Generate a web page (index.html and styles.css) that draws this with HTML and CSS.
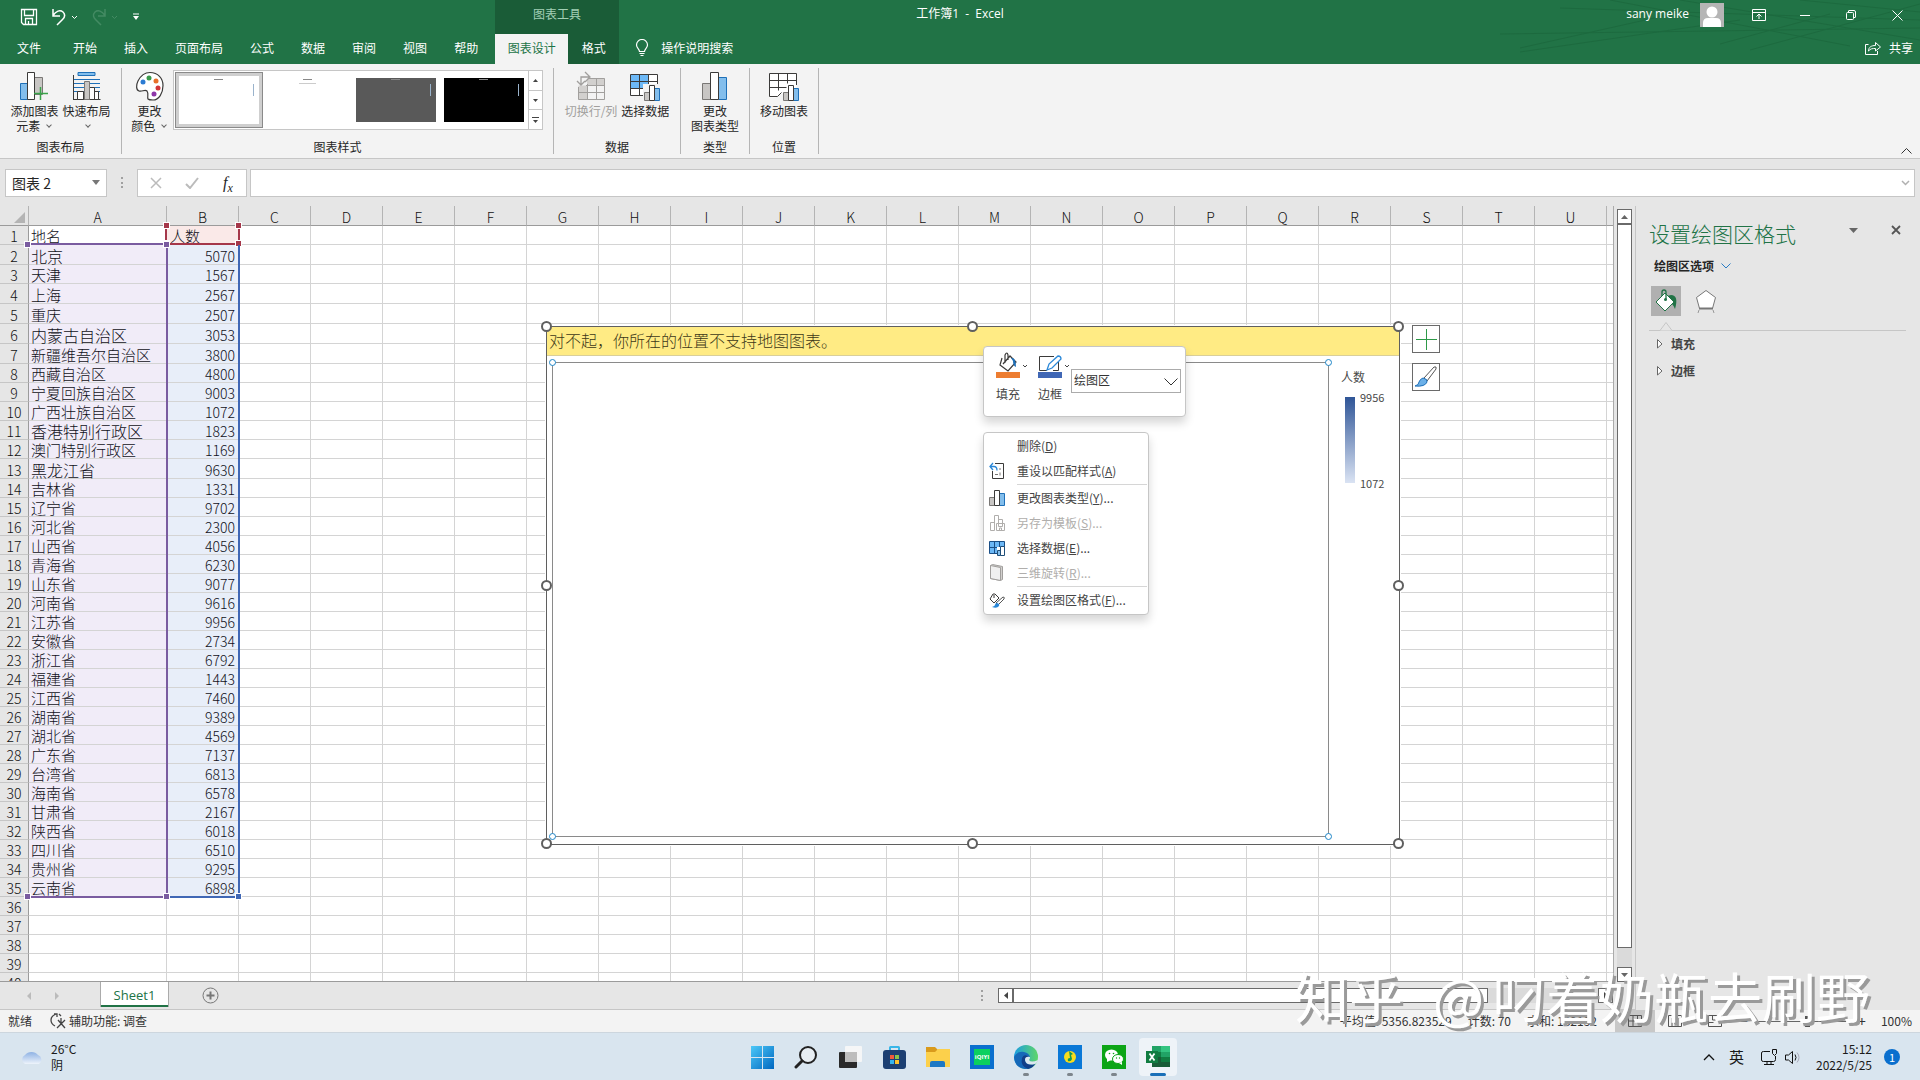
FILE: index.html
```html
<!DOCTYPE html>
<html lang="zh-CN">
<head>
  <meta charset="UTF-8">
  <meta name="viewport" content="width=device-width, initial-scale=1.0">
  <title>工作簿1 - Excel</title>
  <link rel="stylesheet" href="styles.css">
</head>
<body>
  <header class="app-header">
    <svg class="header-art" width="420" height="64" fill="none" stroke="#1d6a3f">
      <path d="M20 48L190 10M20 52L240 20M0 34L420 28M110 0L350 46M180 0L420 40M250 50L420 4M220 44L330 14M60 8L420 20M300 0L420 12"/>
    </svg>
    <div class="title-bar">
      <div class="title-left">
        <div class="quick-access">
          <button class="qa save" aria-label="保存"><svg width="18" height="18" viewBox="0 0 18 18" fill="none" stroke="#fff"><path d="M1.500 1.500h15v15h-13l-2-2zM4.500 1.500v6h9v-6M5.500 16.500v-6h7v6M8.500 13v3" stroke-width="1.300"/></svg></button>
          <button class="qa" aria-label="撤消"><svg width="16" height="18" viewBox="0 0 16 18" fill="none" stroke="#fff" stroke-width="1.500"><path d="M2 1v7h7M2 7.500C5 3 9 1.500 12 4c3 3 1 6-.5 7.500L6 17"/></svg></button>
          <button class="qa chev" aria-label="撤消列表"><svg width="7" height="5" fill="none" stroke="#fff"><path d="M1 1l2.500 2.500L6 1"/></svg></button>
          <button class="qa dim" aria-label="恢复"><svg width="16" height="18" viewBox="0 0 16 18" fill="none" stroke="#5b9b77" stroke-width="1.500"><path d="M14 1v7H7M14 7.500C11 3 7 1.500 4 4c-3 3-1 6 .5 7.500L10 17"/></svg></button>
          <button class="qa chev dim" aria-label="恢复列表"><svg width="7" height="5" fill="none" stroke="#5b9b77"><path d="M1 1l2.500 2.500L6 1"/></svg></button>
          <button class="qa more" aria-label="自定义"><svg width="8" height="8"><path d="M1 1h6" stroke="#fff"/><path d="M1 3h6l-3 4z" fill="#fff"/></svg></button>
        </div>
        <div class="context-title">图表工具</div>
      </div>
      <h1 class="doc-title">工作簿1&nbsp; -&nbsp; Excel</h1>
      <div class="title-right">
        <span class="user-name">sany meike</span>
        <svg class="avatar" width="24" height="24"><rect width="24" height="24" fill="#b5b5b5"/><circle cx="12" cy="9" r="5.500" fill="#fff"/><path d="M3 24v-4q0-5 5-5h8q5 0 5 5v4z" fill="#fff"/></svg>
        <button class="win-btn" aria-label="功能区显示选项"><svg width="14" height="12" fill="none" stroke="#fff"><path d="M.5.5h13v11H.5zM.5 3.500h13M7 10V5M4.500 7.500L7 5l2.500 2.500"/></svg></button>
        <button class="win-btn" aria-label="最小化"><svg width="10" height="10"><path d="M0 5.500h10" stroke="#fff"/></svg></button>
        <button class="win-btn" aria-label="还原"><svg width="10" height="10" fill="none" stroke="#fff"><rect x=".5" y="2.500" width="7" height="7" rx="1"/><path d="M2.500 2.500V1q0-.5.5-.5h5q1.500 0 1.500 1.500v5q0 .5-.5.5H8"/></svg></button>
        <button class="win-btn" aria-label="关闭"><svg width="11" height="11"><path d="M.5.5l10 10M10.500.5l-10 10" stroke="#fff"/></svg></button>
      </div>
    </div>
    <nav class="tabs">
      <button class="tab file">文件</button>
      <button class="tab">开始</button>
      <button class="tab">插入</button>
      <button class="tab">页面布局</button>
      <button class="tab">公式</button>
      <button class="tab">数据</button>
      <button class="tab">审阅</button>
      <button class="tab">视图</button>
      <button class="tab help">帮助</button>
      <button class="tab active">图表设计</button>
      <button class="tab context">格式</button>
      <button class="tab search">
        <svg width="14" height="18" viewBox="0 0 14 18" fill="none" stroke="#fff" stroke-width="1.200"><path d="M4.500 12.500C4.500 10 1.500 9 1.500 6a5.300 5.300 0 0 1 11 0c0 3-3 4-3 6.500zM4.500 14.500h5M5.500 16.500h3"/></svg>
        操作说明搜索
      </button>
      <button class="tab share">
        <svg width="16" height="14" viewBox="0 0 16 14" fill="none" stroke="#fff"><path d="M3.500 3.500H.5v10h12V10M3.500 10c0-4 3-5.500 7-5.500v-3l5 4.500-5 4V7.500c-3 0-5 0-7 2.500z"/></svg>
        共享
      </button>
    </nav>
  </header>

  <section class="ribbon">
    <div class="group g-layout">
      <div class="group-body">
        <button class="cmd">
          <svg width="30" height="30"><path d="M1.500 12.500h8v16h-8z" fill="#83beec" stroke="#1f70b8"/><path d="M15.500 6.500h8v17h-8z" fill="#c8c6c4" stroke="#797775"/><path d="M8.500 1.500h7v27h-7z" fill="#fff" stroke="#3b3a39"/><path d="M21.500 16v13M15 22.500h14" stroke="#3aa34a" stroke-width="1.500"/></svg>
          <span>添加图表<br>元素 <i class="chevron"></i></span>
        </button>
        <button class="cmd">
          <svg width="30" height="30"><path d="M6 1.500h17v3H6z" fill="#83beec" stroke="#1f70b8"/><path d="M1 8.500h27M1 12.500h27M1 16.500h27M1 20.500h27" stroke="#1f70b8"/><path d="M1.500 4v25M1.500 28.500h27" stroke="#3b3a39"/><path d="M5.500 20.500h6v8h-6zM17.500 16.500h5v12h-5zM22.500 20.500h4v8h-4z" fill="#fff" stroke="#3b3a39"/><path d="M12.500 10.500h5v18h-5z" fill="#c8c6c4" stroke="#797775"/></svg>
          <span>快速布局<br><i class="chevron"></i></span>
        </button>
      </div>
      <div class="group-name">图表布局</div>
    </div>

    <div class="group g-style">
      <div class="group-body">
        <button class="cmd narrow">
          <svg width="30" height="30"><path d="M13 28c-1-3 1-5-1-8-2-2-5 1-8 0-3-1-3-6-1-10C6 4 10 1.500 15 1.500c8 0 13 6 13 13C28 22 24 29 18 29c-3 0-4 0-5-1z" fill="#fff" stroke="#3b3a39" stroke-width="1.200"/><circle cx="8" cy="11" r="2.500" fill="#2b7cd3"/><circle cx="14" cy="7" r="2.500" fill="#3a9a4b"/><circle cx="21" cy="10" r="2.500" fill="#e8702a"/><circle cx="23" cy="17" r="2.500" fill="#d13438"/><circle cx="19" cy="23" r="2.500" fill="#8e35a8"/></svg>
          <span>更改<br>颜色 <i class="chevron"></i></span>
        </button>
        <div class="gallery">
          <button class="thumb selected" aria-label="样式 1"><i class="t-title"></i><i class="t-legend"></i></button>
          <button class="thumb" aria-label="样式 2"><i class="t-title"></i><i class="t-sub"></i></button>
          <button class="thumb gray" aria-label="样式 3"><i class="t-title"></i><i class="t-legend"></i></button>
          <button class="thumb black" aria-label="样式 4"><i class="t-title"></i><i class="t-legend"></i></button>
          <div class="gallery-scroll">
            <button aria-label="上一行"><svg width="5" height="3"><path d="M0 3h5L2.500 0z" fill="#444"/></svg></button>
            <button aria-label="下一行"><svg width="5" height="3"><path d="M0 0h5L2.500 3z" fill="#444"/></svg></button>
            <button aria-label="其他"><svg width="7" height="6"><path d="M0 .5h7" stroke="#444"/><path d="M1 3h5L3.500 6z" fill="#444"/></svg></button>
          </div>
        </div>
      </div>
      <div class="group-name">图表样式</div>
    </div>

    <div class="group g-data">
      <div class="group-body">
        <button class="cmd" disabled>
          <svg width="30" height="30"><path d="M2 7.500h27v21H2z" fill="#f3f3f3"/><path d="M11 7.500h18v7H11zM2.500 14.500h9v14h-9z" fill="#d2d0ce"/><path d="M13 7.500h15.500v21h-26V16M10 14.500h18.500M2.500 21.500h26M11.500 13v15.500M20.500 7.500v21" fill="none" stroke="#a19f9d"/><path d="M5 14V6h8M1 10l4 4 4-4M9 1l5 5-5 5" fill="none" stroke="#a19f9d" stroke-width="1.300"/></svg>
          <span>切换行/列</span>
        </button>
        <button class="cmd">
          <svg width="32" height="30"><path d="M1.500 3.500h27v21h-27z" fill="#fff"/><path d="M1.500 3.500h18v14h-18z" fill="#6cb8f6"/><path d="M1.500 3.500h27v21h-27zM1.500 10.500h27M1.500 17.500h27M10.500 3.500v21M19.500 3.500v21" fill="none" stroke="#3b3a39"/><path d="M14 13h17v17H14z" fill="#f3f3f3"/><path d="M15.500 21.500h5v8h-5z" fill="#c8c6c4" stroke="#797775"/><path d="M25.500 17.500h5v12h-5z" fill="#83beec" stroke="#1f70b8"/><path d="M20.500 14.500h5v15h-5z" fill="#fff" stroke="#3b3a39"/></svg>
          <span>选择数据</span>
        </button>
      </div>
      <div class="group-name">数据</div>
    </div>

    <div class="group g-small">
      <div class="group-body">
        <button class="cmd">
          <svg width="28" height="30"><path d="M1.500 12.500h8v16h-8z" fill="#c8c6c4" stroke="#797775"/><path d="M17.500 6.500h8v22h-8z" fill="#83beec" stroke="#1f70b8"/><path d="M9.500 1.500h8v27h-8z" fill="#fff" stroke="#3b3a39"/></svg>
          <span>更改<br>图表类型</span>
        </button>
      </div>
      <div class="group-name">类型</div>
    </div>

    <div class="group g-small">
      <div class="group-body">
        <button class="cmd">
          <svg width="32" height="30"><path d="M1.500 2.500h27v16l-17 5-4 3h-6z" fill="#fff"/><path d="M28.500 14V2.500h-27v23h8l4-4M1.500 9.500h27M1.500 16.500h17M10.500 2.500v17M19.500 2.500v10" fill="none" stroke="#3b3a39"/><path d="M15.500 21.500h5v8h-5z" fill="#c8c6c4" stroke="#797775"/><path d="M25.500 17.500h5v12h-5z" fill="#83beec" stroke="#1f70b8"/><path d="M20.500 14.500h5v15h-5z" fill="#fff" stroke="#3b3a39"/></svg>
          <span>移动图表</span>
        </button>
      </div>
      <div class="group-name">位置</div>
    </div>

    <button class="collapse" aria-label="折叠功能区"><svg width="11" height="6" fill="none" stroke="#333"><path d="M.5 5.500l5-5 5 5"/></svg></button>
  </section>

  <section class="formula-bar">
    <div class="name-box">
      <input type="text" value="图表 2" aria-label="名称框">
      <svg width="8" height="5"><path d="M0 0h8L4 5z" fill="#777"/></svg>
    </div>
    <i class="dots"></i>
    <div class="fx-buttons">
      <button aria-label="取消"><svg width="12" height="12"><path d="M1 1l10 10M11 1L1 11" stroke="#bbb" stroke-width="1.500"/></svg></button>
      <button aria-label="输入"><svg width="14" height="12"><path d="M1 7l4 4 8-10" fill="none" stroke="#bbb" stroke-width="2"/></svg></button>
      <button class="fx" aria-label="插入函数">f<sub>x</sub></button>
    </div>
    <div class="formula-input">
      <input type="text" aria-label="编辑栏">
      <svg width="9" height="6" fill="none" stroke="#b0b0b0" stroke-width="1.500"><path d="M1 1l3.500 3.500L8 1"/></svg>
    </div>
  </section>

  <main class="workspace">
    <div class="book">
      <div class="sheet-row">
        <div class="sheet">
          <table class="cells">
            <colgroup id="cols"></colgroup>
            <thead><tr id="colHeads"></tr></thead>
            <tbody id="rows"></tbody>
          </table>

          <div class="range range-title"><i></i><i></i><i></i><i></i></div>
          <div class="range range-values"><i></i></div>
          <div class="range range-names"><i></i><i></i><i></i><i></i></div>

          <div class="chart">
            <div class="banner">对不起，你所在的位置不支持地图图表。</div>
            <div class="chart-body">
              <div class="plot"><i class="dot tl"></i><i class="dot tr"></i><i class="dot bl"></i><i class="dot br"></i></div>
              <div class="legend">
                <div class="legend-title">人数</div>
                <div class="legend-scale">
                  <div class="legend-bar"></div>
                  <div class="legend-labels"><span>9956</span><span>1072</span></div>
                </div>
              </div>
            </div>
            <i class="handle" style="left:0%;top:0%"></i>
            <i class="handle" style="left:50%;top:0%"></i>
            <i class="handle" style="left:100%;top:0%"></i>
            <i class="handle" style="left:0%;top:50%"></i>
            <i class="handle" style="left:100%;top:50%"></i>
            <i class="handle" style="left:0%;top:100%"></i>
            <i class="handle" style="left:50%;top:100%"></i>
            <i class="handle" style="left:100%;top:100%"></i>

            <div class="chart-tools">
              <button aria-label="图表元素"><svg width="22" height="22"><path d="M11.500 1v21M1 11.500h21" stroke="#2e9a48"/></svg></button>
              <button aria-label="图表样式"><svg width="24" height="24"><path d="M10 13L20 2q3-1 2 2L13 16z" fill="#fff" stroke="#555"/><path d="M9 13q5 1 4 4-2 5-12 4 4-1 4-4 1-3 4-4z" fill="#6cb0e8" stroke="#1f70b8"/></svg></button>
            </div>

            <div class="mini-toolbar">
              <button class="mini">
                <svg width="34" height="26"><path d="M6 6l-2 7 8 6 8-9-6-6-7 8M9 11V3q2-4 3 0v5" fill="none" stroke="#3b3a39" stroke-width="1.200"/><path d="M15 6q5-1 5 9-3-1-3-6z" fill="#1f70b8"/><path d="M0 20h24v6H0z" fill="#ed7d31"/><path d="M27 13l2 2 2-2" fill="none" stroke="#444"/></svg>
                <span>填充</span>
              </button>
              <button class="mini">
                <svg width="34" height="26"><path d="M16 4.500H1.500v14H9M20.500 10v8.500H15" fill="none" stroke="#3b3a39"/><path d="M9 18l2-6 9-8q3 0 3 3l-9 9z" fill="#fff" stroke="#2b88d8" stroke-width="1.300"/><path d="M0 20h24v6H0z" fill="#4067b5"/><path d="M27 13l2 2 2-2" fill="none" stroke="#444"/></svg>
                <span>边框</span>
              </button>
              <div class="picker">
                <select aria-label="图表元素"><option>绘图区</option></select>
                <svg width="14" height="8" fill="none" stroke="#333"><path d="M.5.5L7 7 13.500.5"/></svg>
              </div>
            </div>

            <div class="context-menu">
              <button><i></i>删除(<u>D</u>)</button>
              <button><svg width="16" height="18" fill="none"><path d="M6 1.500h8.500v15h-11V9" stroke="#3b3a39"/><path d="M1 4.500h4q3 0 3 4M4 1L1 4.500 4 8" stroke="#2b88d8" stroke-width="1.300"/><path d="M6 12.500h3M11 6v2M11 10.500v3" stroke="#797775"/></svg>重设以匹配样式(<u>A</u>)</button>
              <hr>
              <button><svg width="16" height="18"><path d="M.5 8.500h5v8h-5z" fill="#c8c6c4" stroke="#797775"/><path d="M10.500 4.500h5v12h-5z" fill="#83beec" stroke="#1f70b8"/><path d="M5.500 1.500h5v15h-5z" fill="#fff" stroke="#3b3a39"/></svg>更改图表类型(<u>Y</u>)...</button>
              <button disabled><svg width="16" height="18" fill="none" stroke="#b0aeac"><path d="M1.500 8.500h4v8h-4zM5.500 16V1.500h4V9M9.500 5.500h4V9M7.500 9.500h8v7h-8zM9.500 9.500v3h4v-3M10.500 16v-2h2v2"/></svg>另存为模板(<u>S</u>)...</button>
              <button><svg width="16" height="18"><path d="M.5 2.500h15v12H.5z" fill="#6cb8f6"/><path d="M.5 2.500h15v12H.5zM.5 8.500h15M5.500 2.500v12M10.500 2.500v6" fill="none" stroke="#1b4f86"/><path d="M8 8h8v9H8z" fill="#fff"/><path d="M8.500 11.500h3v5h-3z" fill="#83beec" stroke="#1f4e79"/><path d="M11.500 7.500h4v9h-4z" fill="#fff" stroke="#1f4e79"/></svg>选择数据(<u>E</u>)...</button>
              <button disabled><svg width="16" height="18" stroke="#a19f9d"><path d="M1.500 1.500l2-1 10 2v13l-2 1-10-2z" fill="#d2d0ce"/><path d="M1.500 1.500l10 2v13l-10-2z" fill="#f0f0f0"/></svg>三维旋转(<u>R</u>)...</button>
              <hr>
              <button><svg width="16" height="18"><path d="M4 3L1 8l4 4 5-5-4-4M5 7V2" fill="none" stroke="#3b3a39"/><path d="M7 12l7-6q2 0 1 2l-6 6z" fill="#fff" stroke="#555"/><path d="M8 12q3 1 2 3-2 3-7 1 3-1 3-2 0-2 2-2z" fill="#2b88d8"/></svg>设置绘图区格式(<u>F</u>)...</button>
            </div>
          </div>
        </div>
        <div class="v-scroll">
          <button aria-label="向上"><svg width="7" height="4"><path d="M0 4h7L3.500 0z" fill="#666"/></svg></button>
          <div class="v-thumb"></div>
          <button aria-label="向下"><svg width="7" height="4"><path d="M0 0h7L3.500 4z" fill="#666"/></svg></button>
        </div>
      </div>

      <div class="sheet-tabs">
        <button class="nav-arrow" aria-label="上一张"><svg width="4" height="8"><path d="M4 0v8L0 4z" fill="#bbb"/></svg></button>
        <button class="nav-arrow" aria-label="下一张"><svg width="4" height="8"><path d="M0 0v8l4-4z" fill="#bbb"/></svg></button>
        <button class="sheet-tab">Sheet1</button>
        <button class="add-sheet" aria-label="新工作表"><svg width="17" height="17" fill="none" stroke="#777"><circle cx="8.500" cy="8.500" r="7.500"/><path d="M8.500 4.500v8M4.500 8.500h8" stroke-width="2"/></svg></button>
        <i class="dots"></i>
        <div class="h-scroll">
          <button aria-label="向左"><svg width="4" height="7"><path d="M4 0v7L0 3.500z" fill="#444"/></svg></button>
          <div class="h-thumb"></div>
          <button aria-label="向右"><svg width="4" height="7"><path d="M0 0v7l4-3.500z" fill="#444"/></svg></button>
        </div>
      </div>
    </div>

    <aside class="pane">
      <div class="pane-head">
        <h2>设置绘图区格式</h2>
        <button aria-label="任务窗格选项"><svg width="9" height="5"><path d="M0 0h9L4.500 5z" fill="#666"/></svg></button>
        <button aria-label="关闭窗格"><svg width="10" height="10"><path d="M1 1l8 8M9 1L1 9" stroke="#555" stroke-width="1.800"/></svg></button>
      </div>
      <button class="pane-options">绘图区选项 <svg width="10" height="6" fill="none" stroke="#2b7cc4"><path d="M.5.5L5 5 9.500.5"/></svg></button>
      <div class="pane-icons">
        <button class="on" aria-label="填充与线条"><svg width="26" height="26"><path d="M18 7q8 0 4 14-1-3-3-5-3-5-5-8z" fill="#217346"/><path d="M12 5l9 9-9 9-9-9z" fill="#fff" stroke="#217346"/><path d="M9 8V4q0-2 2-2t2 2v8" fill="none" stroke="#217346" stroke-width="1.300"/><circle cx="12.500" cy="11.500" r="1.500" fill="#217346"/></svg></button>
        <button aria-label="效果"><svg width="22" height="26"><path d="M11 2.500l9.500 7-3 11h-13l-3-11z" fill="#fff" stroke="#777"/><path d="M4 20.500h14" stroke="#777" stroke-width="2"/><path d="M4 22l-1 3M18 22l1 3" stroke="#999"/></svg></button>
      </div>
      <svg class="notch" width="24" height="10" fill="#e6e6e6" stroke="#c6c6c6"><path d="M0 9.500h6l6-8 6 8h6"/></svg>
      <div class="pane-list">
        <button><svg width="6" height="10" fill="#fff" stroke="#666"><path d="M.5.5v8.500l4.500-4z"/></svg>填充</button>
        <button><svg width="6" height="10" fill="#fff" stroke="#666"><path d="M.5.5v8.500l4.500-4z"/></svg>边框</button>
      </div>
    </aside>
  </main>

  <footer class="status-bar">
    <span>就绪</span>
    <button class="a11y"><svg width="17" height="16" fill="none" stroke="#444" stroke-width="1.300"><path d="M6 1Q1 3 1 7q0 4 4 6M4 1h3v3M9 1l2 2M8 7l7 8M15 7l-8 8M11 5v5"/></svg>辅助功能: 调查</button>
    <div class="stats"><span>平均值: 5356.823529</span><span>计数: 70</span><span>求和: 182132</span></div>
    <div class="views">
      <button class="on" aria-label="普通"><svg width="14" height="12" fill="none" stroke="#555"><path d="M.5.5h13v11H.5zM.5 6h13M5 .5v11M9.500.5V6"/></svg></button>
      <button aria-label="页面布局"><svg width="14" height="12" fill="none" stroke="#555"><path d="M.5.5h13v11H.5zM4 3h6v8.500M4 3v8.500M6 5.500h2M6 8h2"/></svg></button>
      <button aria-label="分页预览"><svg width="14" height="12" fill="none" stroke="#555"><path d="M.5.5h13v11H.5zM4.500.5V5h5V.5M.5 7.500h5"/></svg></button>
    </div>
    <div class="zoom">
      <button aria-label="缩小">−</button>
      <input type="range" min="0" max="100" value="55" aria-label="缩放">
      <button aria-label="放大">+</button>
    </div>
    <span class="percent">100%</span>
  </footer>

  <div class="taskbar">
    <button class="weather">
      <svg width="24" height="16"><defs><linearGradient id="cloud" x2="0" y2="1"><stop stop-color="#8fb2e4"/><stop offset="1" stop-color="#eef4fb"/></linearGradient></defs><path d="M5 15a5 5 0 0 1 0-9 8 7 0 0 1 13 0 5 5 0 0 1 1 9z" fill="url(#cloud)"/></svg>
      <span>26°C<br>阴</span>
    </button>
    <div class="apps">
      <button aria-label="开始"><svg width="24" height="24"><defs><linearGradient id="win" x2="1" y2="1"><stop stop-color="#4cc8f8"/><stop offset="1" stop-color="#0067c0"/></linearGradient></defs><path d="M1 1h11v11H1zM13 1h11v11H13zM1 13h11v11H1zM13 13h11v11H13z" fill="url(#win)"/></svg></button>
      <button aria-label="搜索"><svg width="24" height="24" fill="none" stroke="#222"><circle cx="14" cy="10" r="8" stroke-width="2" fill="#e8eef3"/><path d="M8 16l-6 6" stroke-width="3" stroke-linecap="round"/></svg></button>
      <button aria-label="任务视图"><svg width="24" height="24"><rect x="7" y="1" width="17" height="16" rx="1" fill="#f5f6f7"/><rect x="1" y="7" width="18" height="16" rx="1" fill="#2a2a2a"/><path d="M7 7h12v10H7z" fill="#bdbdbd"/></svg></button>
      <button aria-label="应用商店"><svg width="24" height="24"><path d="M8 5V2.500q0-.5.500-.5h8q.5 0 .5.500V5" fill="none" stroke="#38b6e8" stroke-width="2"/><rect x="1" y="5" width="23" height="19" rx="3" fill="#1c3f72"/><path d="M8 10h4v4H8z" fill="#f05a3c"/><path d="M13 10h4v4h-4z" fill="#8bc34a"/><path d="M8 15h4v4H8z" fill="#35b5ef"/><path d="M13 15h4v4h-4z" fill="#fcc22d"/></svg></button>
      <button aria-label="文件资源管理器"><svg width="26" height="24"><path d="M1 2h9l3 3v4H1z" fill="#d99a1c"/><path d="M1 7h9l3-3h12v18H1z" fill="#fcd04b"/><path d="M5 22v-4q0-2 2-2h11q2 0 2 2v4z" fill="#1d78c4"/></svg></button>
      <button aria-label="爱奇艺"><svg width="24" height="24"><path d="M0 0h24v24H0z" fill="#0a6fce"/><path d="M4 4h16v16H4z" fill="#0bd05f"/><text x="12" y="14" text-anchor="middle" class="iqiyi">iQIYI</text></svg></button>
      <button class="running" aria-label="Edge"><svg width="24" height="24"><defs><linearGradient id="edge" x2="1"><stop stop-color="#1b9de2"/><stop offset="1" stop-color="#5fd668"/></linearGradient></defs><circle cx="12" cy="12" r="12" fill="url(#edge)"/><path d="M0 12Q3 6 10 7q5 1 6 5-5-1-5 3 1 6 10 4-4 5-10 5Q1 23 0 12z" fill="#1668b8"/><path d="M8 13q-2 8 6 11 5-1 7-5-9 2-10-4 0-3 4-3Q10 8 8 13z" fill="#123f88"/><path d="M11 15q0-4 5-3 0 2-1 3 2 3 9 0-1 3-3 4-9 2-10-4z" fill="#dce7f0"/></svg></button>
      <button class="running" aria-label="QQ音乐"><svg width="24" height="24"><path d="M0 0h24v24H0z" fill="#0a78d7"/><circle cx="12" cy="12" r="6" fill="#f8dc1e"/><path d="M11 6l4 3-2 1 1 4q-1 3-4 2-1-3 2-3z" fill="#159a50"/></svg></button>
      <button class="running" aria-label="微信"><svg width="24" height="24"><path d="M0 0h24v24H0z" fill="#0ca516"/><ellipse cx="9.500" cy="10" rx="6.500" ry="5.500" fill="#fff"/><path d="M5 13v4l4-2z" fill="#fff"/><ellipse cx="16" cy="14" rx="5.500" ry="4.500" fill="#fff" stroke="#0ca516"/><path d="M17 18l3 2v-3z" fill="#fff"/><g fill="#0ca516"><circle cx="7.500" cy="8.500" r=".8"/><circle cx="11.500" cy="8.500" r=".8"/><circle cx="14.500" cy="13" r=".7"/><circle cx="17.500" cy="13" r=".7"/></g></svg></button>
      <button class="current" aria-label="Excel"><svg width="24" height="24"><path d="M6 1h9v6H6z" fill="#21a366"/><path d="M15 1h9v6h-9z" fill="#33c481"/><path d="M6 7h9v6H6z" fill="#107c41"/><path d="M15 7h9v6h-9z" fill="#21a366"/><path d="M6 12h18v10H6z" fill="#185c37"/><path d="M15 12h9v5h-9z" fill="#107c41"/><path d="M0 6h12v12H0z" fill="#107c41"/><path d="M3.500 8.500l5 7M8.500 8.500l-5 7" stroke="#fff" stroke-width="1.800"/></svg></button>
    </div>
    <div class="tray">
      <button aria-label="显示隐藏的图标"><svg width="12" height="8" fill="none" stroke="#111" stroke-width="1.300"><path d="M1 7l5-5 5 5"/></svg></button>
      <button class="ime">英</button>
      <button class="net" aria-label="网络和音量"><svg width="42" height="18" fill="none" stroke="#111"><path d="M10 3.500H3.500Q1.500 3.500 1.500 5v7q0 1.500 2 1.500h10q2 0 2-2V8M4 16.500h10M7 13.500v3M11 13.500v3M12.500 1.500h4v4l-2 2-2-2zM25.500 7v5h3l4 3.500v-12L28.500 7z"/><path d="M35 6.500q2 3 0 6" /><path d="M37 4.500q4 5 0 10" stroke="#aab"/></svg></button>
      <button class="clock">15:12<br>2022/5/25</button>
      <button class="badge">1</button>
    </div>
  </div>

  <div class="watermark"><span>知乎</span><span class="at">@</span><span>叼着奶瓶去刷野</span></div>
  <script src="script.js"></script>
</body>
</html>
```
FILE: styles.css
```css
* {
  box-sizing: border-box;
}
body {
  margin: 0;
  height: 100vh;
  display: flex;
  flex-direction: column;
  overflow: hidden;
  background: #e6e6e6;
  color: #262626;
  font-family: "Noto Sans CJK SC", sans-serif;
  font-size: 12px;
  line-height: 16px;
}
button, input, select {
  font: inherit;
  color: inherit;
}
button {
  margin: 0;
  padding: 0;
  border: none;
  background: none;
}
svg {
  display: block;
  flex: none;
}

/* header */
.app-header {
  position: relative;
  background: #217346;
  color: #fff;
}
.header-art {
  position: absolute;
  top: 0;
  right: 0;
}
.title-bar {
  position: relative;
  height: 34px;
  display: grid;
  grid-template-columns: 1fr auto 1fr;
}
.title-left, .quick-access, .title-right {
  display: flex;
  align-items: center;
}
.title-left {
  align-items: stretch;
}
.quick-access {
  width: 495px;
  padding-left: 20px;
}
.qa.save {
  margin-right: 13px;
}
.qa.chev {
  margin: 0 13px 0 4px;
}
.qa.more {
  margin-left: 1px;
}
.dim {
  opacity: 0.6;
}
.context-title {
  width: 124px;
  padding-top: 6px;
  background: #1a5c37;
  color: #a3d0b5;
  text-align: center;
}
.doc-title {
  margin: 0;
  padding-top: 6px;
  font-family: "Open Sans", "Noto Sans CJK SC", sans-serif;
  font-size: 12px;
  font-weight: normal;
}
.title-right {
  justify-content: flex-end;
  align-items: flex-start;
}
.user-name {
  padding-top: 6px;
  font-family: "Open Sans", sans-serif;
}
.avatar {
  margin: 3px 12px 0 11px;
}
.win-btn {
  width: 46px;
  height: 30px;
  display: flex;
  align-items: center;
  justify-content: center;
}
.tabs {
  position: relative;
  display: flex;
  height: 30px;
}
.tab {
  padding: 0 13px 2px;
  margin-right: 1px;
}
.tab.file {
  padding: 0 17px 2px;
  margin-right: 2px;
}
.tab.help {
  margin-right: 4px;
}
.tab.active {
  width: 73px;
  margin: 0;
  padding: 0 0 2px;
  background: #f3f3f3;
  color: #217346;
}
.tab.context {
  width: 51px;
  margin: 0;
  padding: 0 0 2px;
  background: #1a5c37;
}
.tab.search, .tab.share {
  display: flex;
  align-items: center;
  gap: 12px;
}
.tab.search {
  padding-left: 16px;
}
.tab.share {
  gap: 8px;
  margin: 0 0 0 auto;
  padding: 0 7px 2px;
}

/* ribbon */
.ribbon {
  display: flex;
  height: 95px;
  padding: 4px 0;
  background: #f3f3f3;
  border-bottom: 1px solid #c6c6c6;
}
.group {
  display: flex;
  flex-direction: column;
  border-right: 1px solid #b5b5b5;
}
.group-body {
  flex: 1;
  display: flex;
  justify-content: center;
}
.group-name {
  height: 14px;
  line-height: 14px;
  text-align: center;
}
.g-layout {
  width: 122px;
}
.g-style {
  width: 432px;
}
.g-style .group-body {
  justify-content: flex-start;
  padding-left: 4px;
}
.g-data {
  width: 127px;
}
.g-small {
  width: 69px;
}
.cmd {
  display: flex;
  flex-direction: column;
  align-items: center;
  gap: 2px;
  padding: 3px 2px 0;
  line-height: 15px;
  white-space: nowrap;
}
.cmd.narrow {
  width: 47px;
}
.cmd:disabled {
  color: #a19f9d;
}
.chevron {
  display: inline-block;
  width: 4px;
  height: 4px;
  margin: 0 2px 4px 4px;
  border: solid #666;
  border-width: 0 1px 1px 0;
  transform: rotate(45deg);
}
.gallery {
  display: flex;
  height: 60px;
  margin-top: 2px;
  background: #fff;
  border: 1px solid #c6c6c6;
}
.thumb {
  position: relative;
  width: 80px;
  height: 44px;
  margin: 7px 4px 0;
  background: #fff;
}
.thumb.selected {
  width: 88px;
  height: 56px;
  margin: 1px 1px 0;
  border: 1px solid #8a8a8a;
  box-shadow: inset 0 0 0 3px #cfcfcf;
}
.thumb.gray {
  background: #595959;
}
.thumb.black {
  background: #000;
}
.t-title, .t-sub, .t-legend {
  position: absolute;
  display: block;
  top: 1px;
  left: 50%;
  width: 9px;
  height: 1px;
  margin-left: -5px;
  background: #888;
}
.selected .t-title {
  top: 6px;
}
.t-sub {
  top: 5px;
  width: 17px;
  margin-left: -9px;
  background: #ccc;
}
.t-legend {
  top: 6px;
  left: auto;
  right: 3px;
  width: 3px;
  height: 12px;
  border-left: 1px solid #9ab3cc;
  background: none;
}
.selected .t-legend {
  top: 11px;
  right: 6px;
}
.gallery-scroll {
  width: 14px;
  display: flex;
  flex-direction: column;
  border-left: 1px solid #c6c6c6;
}
.gallery-scroll button {
  flex: 1;
  display: flex;
  align-items: center;
  justify-content: center;
}
.gallery-scroll button + button {
  border-top: 1px solid #c6c6c6;
}
.collapse {
  align-self: flex-end;
  margin-left: auto;
  padding: 0 8px;
}

/* formula bar */
.formula-bar {
  display: flex;
  align-items: center;
  height: 47px;
  padding: 0 5px;
}
.name-box, .fx-buttons, .formula-input {
  display: flex;
  align-items: center;
  height: 28px;
  background: #fff;
  border: 1px solid #c6c6c6;
}
.name-box {
  width: 102px;
  padding: 0 6px;
}
.name-box input, .formula-input input {
  flex: 1;
  min-width: 0;
  padding: 0;
  border: none;
  background: none;
  font-size: 14px;
}
.dots {
  width: 2px;
  height: 11px;
  border: dotted #a0a0a0;
  border-width: 0 0 0 2px;
}
.formula-bar .dots {
  margin: 0 14px;
}
.fx-buttons {
  width: 110px;
  margin-right: 3px;
}
.fx-buttons button {
  flex: 1;
  display: flex;
  align-items: center;
  justify-content: center;
}
.fx-buttons .fx {
  display: block;
  font: italic 16px "Liberation Serif", serif;
}
.fx sub {
  font-size: 12px;
  line-height: 0;
}
.formula-input {
  flex: 1;
  padding: 0 4px;
}

/* sheet */
.workspace {
  flex: 1;
  min-height: 0;
  display: flex;
}
.book {
  flex: 1;
  min-width: 0;
  display: flex;
  flex-direction: column;
}
.sheet-row {
  flex: 1;
  min-height: 0;
  display: flex;
}
.sheet {
  position: relative;
  flex: 1;
  overflow: hidden;
  background: #fff;
  border-right: 1px solid #ababab;
  border-bottom: 1px solid #9b9b9b;
}
.cells {
  table-layout: fixed;
  width: 1679px;
  border-collapse: separate;
  border-spacing: 0;
  font-size: 15px;
  font-weight: 300;
  color: #101020;
}
.col-head {
  width: 29px;
}
.col-a {
  width: 138px;
}
.col-n {
  width: 72px;
}
.cells th, .cells td {
  height: 19px;
  padding: 2px 0 0;
  line-height: 16px;
  white-space: nowrap;
  border: solid #d4d4d4;
  border-width: 0 1px 1px 0;
}
.cells tr.tall > * {
  height: 20px;
}
.cells th {
  background: #e6e6e6;
  color: #111;
  font-size: 14px;
  font-weight: 300;
}
.cells thead th {
  height: 20px;
  padding-top: 3px;
  border-color: #b4b4b4;
  border-bottom-color: #9b9b9b;
}
.cells tbody th {
  border-color: #c6c6c6;
  border-right-color: #9b9b9b;
}
.corner svg {
  margin-left: 14px;
}
.cells td.name {
  padding-left: 2px;
}
.cells td.num {
  padding-right: 3px;
  font-size: 14px;
  text-align: right;
}
.big td.name {
  font-size: 16px;
}
.data td.name {
  background: #f1ecf8;
}
.data td.num {
  background: #e8eef9;
}
.titles td:nth-child(3) {
  padding-left: 3px;
  background: #fae9e8;
}

/* coloured outlines round the chart's source ranges */
.range {
  position: absolute;
  border: 0 solid;
}
.range i {
  position: absolute;
  width: 7px;
  height: 7px;
  border: 1px solid #fff;
  background: currentColor;
}
.range i:nth-child(1) { right: -4px; bottom: -4px; }
.range i:nth-child(2) { left: -4px; bottom: -4px; }
.range i:nth-child(3) { right: -4px; top: -4px; }
.range i:nth-child(4) { left: -4px; top: -4px; }
.range-title {
  left: 165px;
  top: 20px;
  width: 75px;
  height: 19px;
  color: #a5374a;
  border-color: #a5374a;
  border-width: 0 2px 2px;
}
.range-values {
  left: 167px;
  top: 39px;
  width: 73px;
  height: 653px;
  color: #4067b5;
  border-color: #4067b5;
  border-width: 0 2px 2px 0;
}
.range-names {
  left: 28px;
  top: 37px;
  width: 140px;
  height: 655px;
  color: #7a5ca0;
  border-color: #7a5ca0;
  border-width: 2px 2px 2px 0;
}

/* chart */
.chart {
  position: absolute;
  left: 546px;
  top: 120px;
  width: 854px;
  height: 519px;
  display: flex;
  flex-direction: column;
  background: #fff;
  border: 1px solid #5f5f5f;
  outline: 1px solid #fff;
}
.banner {
  height: 29px;
  padding-left: 2px;
  background: #ffeb84;
  border-bottom: 1px solid #d9cf9a;
  color: #3d3818;
  font-size: 16px;
  font-weight: 300;
  line-height: 26px;
}
.chart-body {
  flex: 1;
  display: flex;
  gap: 12px;
  padding: 6px 0 7px 5px;
}
.plot {
  position: relative;
  width: 777px;
  border: 1px solid #8a8a8a;
}
.dot, .handle {
  position: absolute;
  border-radius: 50%;
  background: #fff;
}
.dot {
  width: 7px;
  height: 7px;
  border: 1px solid #1f86c8;
}
.dot.tl, .dot.bl { left: -4px; }
.dot.tr, .dot.br { right: -4px; }
.dot.tl, .dot.tr { top: -4px; }
.dot.bl, .dot.br { bottom: -4px; }
.handle {
  width: 11px;
  height: 11px;
  margin: -6px;
  border: 2px solid #5f5f5f;
}
.legend {
  padding-top: 7px;
  color: #4a4a4a;
}
.legend-scale {
  display: flex;
  gap: 5px;
  margin: 12px 0 0 4px;
}
.legend-bar {
  width: 10px;
  height: 86px;
  background: linear-gradient(#2f5597, #dae3f3);
}
.legend-labels {
  display: flex;
  flex-direction: column;
  justify-content: space-between;
  margin: -8px 0;
  font-size: 11px;
}
.chart-tools {
  position: absolute;
  left: 865px;
  top: -2px;
  display: grid;
  gap: 10px;
}
.chart-tools button {
  width: 28px;
  height: 28px;
  display: flex;
  align-items: center;
  justify-content: center;
  background: #fff;
  border: 1px solid #6a6a6a;
}
.mini-toolbar, .context-menu {
  position: absolute;
  left: 436px;
  background: #fff;
  border: 1px solid #c6c6c6;
  border-radius: 4px;
  box-shadow: 0 6px 10px rgba(0, 0, 0, 0.16);
  color: #444;
}
.mini-toolbar {
  top: 19px;
  width: 203px;
  height: 71px;
  display: flex;
  padding: 5px 4px 0 12px;
}
.mini {
  width: 42px;
  height: 50px;
  display: flex;
  flex-direction: column;
  align-items: flex-start;
  justify-content: space-between;
}
.mini:nth-child(2) {
  width: 33px;
}
.picker {
  position: relative;
  flex: 1;
  margin-top: 17px;
}
.picker select {
  width: 100%;
  height: 24px;
  padding: 0 2px 2px;
  appearance: none;
  background: #fff;
  border: 1px solid #ababab;
  border-radius: 0;
  color: #333;
}
.picker svg {
  position: absolute;
  right: 3px;
  top: 9px;
}
.context-menu {
  top: 105px;
  width: 166px;
  padding: 1px;
}
.context-menu button {
  width: 100%;
  height: 25px;
  display: flex;
  align-items: center;
  padding: 0 0 2px 4px;
}
.context-menu button:disabled {
  color: #b0aeac;
}
.context-menu svg, .context-menu i {
  width: 16px;
  margin-right: 12px;
}
.context-menu hr {
  height: 1px;
  margin: 0 0 1px 32px;
  border: none;
  background: #d6d6d6;
}

/* scroll bars and sheet tabs */
.v-scroll {
  width: 15px;
  margin: 3px 3px 0;
  display: flex;
  flex-direction: column;
  background: #dadada;
}
.v-scroll button, .h-scroll button {
  width: 15px;
  height: 15px;
  display: flex;
  align-items: center;
  justify-content: center;
  background: #fff;
  border: 1px solid #6a6a6a;
}
.v-thumb {
  flex: 1;
  margin-bottom: 19px;
  background: #fff;
  border: 1px solid #6a6a6a;
}
.sheet-tabs {
  display: flex;
  align-items: center;
  height: 28px;
  padding: 0 22px 0 27px;
  border-bottom: 1px solid #c6c6c6;
}
.nav-arrow {
  width: 28px;
}
.sheet-tab {
  align-self: flex-start;
  width: 69px;
  height: 25px;
  margin: 0 33px 0 17px;
  background: #fff;
  border: solid #ababab;
  border-width: 0 1px;
  box-shadow: inset 0 -2px #217346;
  color: #217346;
  font-family: "Open Sans", sans-serif;
  font-size: 13px;
}
.sheet-tabs .dots {
  margin-left: auto;
}
.h-scroll {
  width: 615px;
  margin-left: 15px;
  display: flex;
  background: #dadada;
}
.h-thumb {
  flex: 1;
  margin-right: 110px;
  background: #fff;
  border: 1px solid #6a6a6a;
}

/* task pane */
.pane {
  width: 285px;
  padding: 15px 14px 0 13px;
  border-left: 1px solid #c6c6c6;
}
.pane-head {
  display: flex;
  align-items: flex-start;
}
.pane-head h2 {
  flex: 1;
  margin: 0;
  color: #217346;
  font-size: 21px;
  font-weight: 300;
  line-height: 24px;
}
.pane-head button {
  height: 18px;
  margin: 0 5px 0 28px;
}
.pane-options {
  display: flex;
  align-items: center;
  gap: 7px;
  margin: 13px 0 0 5px;
  font-weight: bold;
}
.pane-icons {
  display: flex;
  gap: 10px;
  margin: 12px 0 5px 2px;
}
.pane-icons button {
  width: 30px;
  height: 30px;
  display: flex;
  align-items: center;
  justify-content: center;
}
.pane-icons .on {
  background: #b0b0b0;
}
.notch {
  margin: 0 0 -1px 5px;
  position: relative;
}
.pane-list {
  display: grid;
  gap: 11px;
  padding: 5px 0 0 8px;
  border-top: 1px solid #c6c6c6;
}
.pane-list button {
  display: flex;
  align-items: center;
  gap: 8px;
  color: #444;
  font-weight: bold;
}

/* status bar */
.status-bar {
  display: flex;
  align-items: center;
  height: 22px;
  padding: 0 8px;
  background: #f3f3f3;
  color: #333;
}
.a11y {
  display: flex;
  align-items: center;
  gap: 2px;
  margin-left: 18px;
}
.stats {
  display: flex;
  gap: 16px;
  margin: 0 18px 0 auto;
}
.views {
  display: flex;
  margin-right: 4px;
}
.views button {
  width: 40px;
  height: 22px;
  display: flex;
  align-items: center;
  justify-content: center;
}
.views .on {
  background: #c8c8c8;
}
.zoom {
  display: flex;
  align-items: center;
  gap: 8px;
}
.zoom button {
  width: 10px;
  font-size: 14px;
}
.zoom input {
  width: 92px;
  height: 12px;
  margin: 0;
  appearance: none;
  background: linear-gradient(#666, #666) center / 100% 1px no-repeat;
}
.zoom input::-webkit-slider-thumb {
  appearance: none;
  width: 5px;
  height: 11px;
  background: #555;
}
.percent {
  width: 45px;
  text-align: right;
}

/* taskbar */
.taskbar {
  display: grid;
  grid-template-columns: 1fr auto 1fr;
  height: 48px;
  padding: 0 16px;
  background: #d9e5ef;
  border-top: 1px solid #cdd6de;
  color: #1a1a1a;
}
.weather {
  display: flex;
  align-items: center;
  gap: 7px;
  padding-left: 4px;
  text-align: left;
}
.apps {
  display: flex;
  align-items: center;
  gap: 6px;
}
.apps button {
  position: relative;
  width: 38px;
  height: 38px;
  display: flex;
  align-items: center;
  justify-content: center;
  border-radius: 4px;
}
.apps .current {
  background: #eef3f8;
}
.running::after, .current::after {
  content: "";
  position: absolute;
  bottom: 0;
  width: 6px;
  height: 3px;
  border-radius: 2px;
  background: #7d858c;
}
.current::after {
  width: 16px;
  background: #1a6fb8;
}
.iqiyi {
  fill: #fff;
  font: bold 6px "Open Sans", sans-serif;
}
.tray {
  display: flex;
  align-items: center;
  justify-content: flex-end;
}
.ime {
  margin: 0 16px 0 14px;
  font-size: 15px;
}
.clock {
  width: 70px;
  margin-right: 12px;
  text-align: right;
}
.badge {
  width: 16px;
  height: 16px;
  margin-right: 4px;
  border-radius: 50%;
  background: #0a6fce;
  color: #fff;
  font-size: 11px;
}

.watermark {
  position: fixed;
  right: 50px;
  bottom: 54px;
  display: flex;
  color: #fff;
  font-size: 54px;
  line-height: 60px;
  text-shadow: 3px 3px 0 #9a9a9a;
  pointer-events: none;
}
.watermark .at {
  margin: 0 8px 0 30px;
}
```
FILE: script.js
```js
const data = [
  ["北京", 5070], ["天津", 1567], ["上海", 2567], ["重庆", 2507],
  ["内蒙古自治区", 3053], ["新疆维吾尔自治区", 3800], ["西藏自治区", 4800],
  ["宁夏回族自治区", 9003], ["广西壮族自治区", 1072], ["香港特别行政区", 1823],
  ["澳门特别行政区", 1169], ["黑龙江省", 9630], ["吉林省", 1331], ["辽宁省", 9702],
  ["河北省", 2300], ["山西省", 4056], ["青海省", 6230], ["山东省", 9077],
  ["河南省", 9616], ["江苏省", 9956], ["安徽省", 2734], ["浙江省", 6792],
  ["福建省", 1443], ["江西省", 7460], ["湖南省", 9389], ["湖北省", 4569],
  ["广东省", 7137], ["台湾省", 6813], ["海南省", 6578], ["甘肃省", 2167],
  ["陕西省", 6018], ["四川省", 6510], ["贵州省", 9295], ["云南省", 6898]
];
const letters = "ABCDEFGHIJKLMNOPQRSTU".split("").concat("");
const tallRows = [2, 4, 5, 6, 7, 13];
const bigRows = [2, 6, 11, 13];

document.getElementById("cols").innerHTML =
  '<col class="col-head"><col class="col-a">' + '<col class="col-n">'.repeat(letters.length - 1);

document.getElementById("colHeads").innerHTML =
  '<th class="corner"><svg width="11" height="11"><path d="M11 0v11H0z" fill="#b4b4b4"/></svg></th>' +
  letters.map(l => `<th>${l}</th>`).join("");

let html = "";
for (let r = 1; r <= 40; r++) {
  const classes = [];
  if (r === 1) classes.push("titles");
  if (tallRows.includes(r)) classes.push("tall");
  if (bigRows.includes(r)) classes.push("big");
  const item = data[r - 2];
  if (item) classes.push("data");
  html += `<tr class="${classes.join(" ")}"><th>${r}</th>`;
  if (r === 1) {
    html += '<td class="name">地名</td><td>人数</td>';
  } else if (item) {
    html += `<td class="name">${item[0]}</td><td class="num">${item[1]}</td>`;
  } else {
    html += "<td></td><td></td>";
  }
  html += "<td></td>".repeat(letters.length - 2) + "</tr>";
}
document.getElementById("rows").innerHTML = html;
```
